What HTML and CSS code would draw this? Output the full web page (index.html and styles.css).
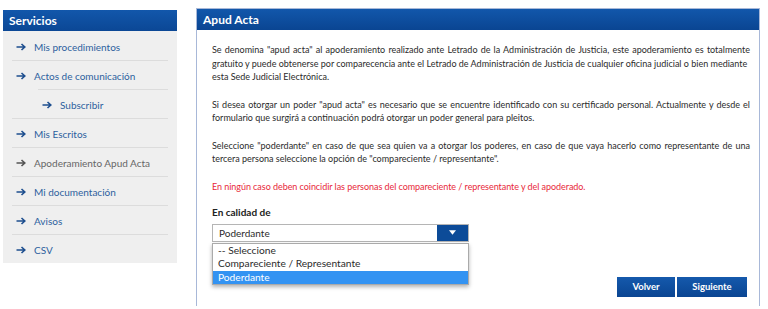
FILE: index.html
```html
<!DOCTYPE html>
<html lang="es">
<head>
    <meta charset="UTF-8">
    <title>Apud Acta</title>
    <link rel="stylesheet" href="styles.css">
</head>
<body>
    <div class="page">
        <aside class="sidebar">
            <div class="sidebar-title">Servicios</div>
            <ul class="nav">
                <li><a href="#"><svg class="arrow" viewBox="0 0 10 8"><path d="M0.5 4H8.5M5.5 1L8.8 4L5.5 7"/></svg>Mis procedimientos</a></li>
                <li><a href="#"><svg class="arrow" viewBox="0 0 10 8"><path d="M0.5 4H8.5M5.5 1L8.8 4L5.5 7"/></svg>Actos de comunicación</a></li>
                <li class="sub"><a href="#"><svg class="arrow" viewBox="0 0 10 8"><path d="M0.5 4H8.5M5.5 1L8.8 4L5.5 7"/></svg>Subscribir</a></li>
                <li><a href="#"><svg class="arrow" viewBox="0 0 10 8"><path d="M0.5 4H8.5M5.5 1L8.8 4L5.5 7"/></svg>Mis Escritos</a></li>
                <li class="current"><a href="#"><svg class="arrow" viewBox="0 0 10 8"><path d="M0.5 4H8.5M5.5 1L8.8 4L5.5 7"/></svg>Apoderamiento Apud Acta</a></li>
                <li><a href="#"><svg class="arrow" viewBox="0 0 10 8"><path d="M0.5 4H8.5M5.5 1L8.8 4L5.5 7"/></svg>Mi documentación</a></li>
                <li><a href="#"><svg class="arrow" viewBox="0 0 10 8"><path d="M0.5 4H8.5M5.5 1L8.8 4L5.5 7"/></svg>Avisos</a></li>
                <li><a href="#"><svg class="arrow" viewBox="0 0 10 8"><path d="M0.5 4H8.5M5.5 1L8.8 4L5.5 7"/></svg>CSV</a></li>
            </ul>
        </aside>

        <section class="panel">
            <div class="panel-title">Apud Acta</div>
            <div class="panel-body">
                <p>Se denomina "apud acta" al apoderamiento realizado ante Letrado de la Administración de Justicia, este apoderamiento es totalmente gratuito y puede obtenerse por comparecencia ante el Letrado de Administración de Justicia de cualquier oficina judicial o bien mediante<br>esta Sede Judicial Electrónica.</p>
                <p>Si desea otorgar un poder "apud acta" es necesario que se encuentre identificado con su certificado personal. Actualmente y desde el formulario que surgirá a continuación podrá otorgar un poder general para pleitos.</p>
                <p>Seleccione "poderdante" en caso de que sea quien va a otorgar los poderes, en caso de que vaya hacerlo como representante de una tercera persona seleccione la opción de "compareciente / representante".</p>
                <p class="warning">En ningún caso deben coincidir las personas del compareciente / representante y del apoderado.</p>

                <label class="field-label">En calidad de</label>
                <div class="select-wrap">
                    <div class="select">
                        <span class="select-value">Poderdante</span>
                        <span class="select-btn"><svg viewBox="0 0 8 5"><path d="M0 0H8L4 5Z"/></svg></span>
                    </div>
                    <ul class="options">
                        <li>-- Seleccione</li>
                        <li>Compareciente / Representante</li>
                        <li class="selected">Poderdante</li>
                    </ul>
                </div>

                <div class="actions">
                    <button class="btn">Volver</button>
                    <button class="btn">Siguiente</button>
                </div>
            </div>
        </section>
    </div>
</body>
</html>
```

FILE: styles.css
```css
body {
    margin: 0;
    background: #fff;
    font-family: Lato, "Open Sans", sans-serif;
    color: #2b2b2b;
}
.page {
    display: flex;
    align-items: flex-start;
    padding-left: 3px;
}

/* sidebar */
.sidebar {
    width: 174px;
    margin-top: 10px;
    background: #efefef;
}
.sidebar-title {
    height: 21px;
    line-height: 21px;
    padding-left: 6px;
    background: linear-gradient(#1257ab, #0b4795);
    color: #fff;
    font-weight: bold;
    font-size: 12px;
}
.nav {
    list-style: none;
    margin: 0;
    padding: 0 9px 0 9px;
}
.nav li {
    height: 29px;
    border-top: 1px solid #dcdcdc;
    box-sizing: border-box;
}
.nav li:first-child {
    border-top: none;
}
.nav li.sub {
    margin-left: 26px;
}
.nav a {
    display: flex;
    align-items: center;
    height: 100%;
    padding: 2px 0 0 4px;
    box-sizing: border-box;
    color: #2d5f9e;
    text-decoration: none;
    font-size: 10px;
}
.nav li.current a {
    color: #666;
}
.arrow {
    width: 10px;
    height: 8px;
    margin-right: 8px;
    fill: none;
    stroke: #1e4f8f;
    stroke-width: 1.6;
}
.nav li.current .arrow {
    stroke: #555;
}

/* main panel */
.panel {
    width: 562px;
    margin-left: 19px;
    margin-top: 8px;
    border: 1px solid #a8b8d8;
    border-bottom: none;
}
.panel-title {
    height: 21px;
    line-height: 21px;
    padding-left: 6px;
    background: linear-gradient(#1257ab, #0a4592);
    color: #fff;
    font-weight: bold;
    font-size: 12px;
}
.panel-body {
    padding: 13px 9px 9px 15px;
    font-size: 9px;
    line-height: 13.5px;
}
.panel-body p {
    margin: 0 0 14px;
    text-align: justify;
}
.panel-body p.warning {
    color: #e8283a;
    margin-bottom: 13px;
    letter-spacing: -0.05px;
}
.field-label {
    display: block;
    font-weight: bold;
    font-size: 10px;
    color: #222;
    margin-bottom: 4px;
}

/* select */
.select-wrap {
    position: relative;
    width: 257px;
}
.select {
    display: flex;
    height: 18px;
    border: 1px solid #b5b5b5;
    box-sizing: border-box;
    font-size: 10px;
}
.select-value {
    flex: 1;
    line-height: 16px;
    padding-left: 6px;
}
.select-btn {
    width: 31px;
    background: #0c4b98;
    display: flex;
    align-items: center;
    justify-content: center;
}
.select-btn svg {
    width: 7px;
    height: 5px;
    fill: #fff;
}
.options {
    position: absolute;
    top: 19px;
    left: 0;
    right: 0;
    margin: 0;
    padding: 0;
    list-style: none;
    background: #fff;
    border: 1px solid #aaa;
    box-shadow: 0 2px 4px rgba(0,0,0,0.3);
    font-size: 10.2px;
    line-height: 13.5px;
}
.options li {
    padding-left: 5px;
}
.options li.selected {
    background: #3393f2;
    color: #fff;
}

/* buttons */
.actions {
    display: flex;
    justify-content: flex-end;
    gap: 2px;
    margin-top: 35px;
    padding-right: 3px;
}
.btn {
    height: 20px;
    border: none;
    background: linear-gradient(#1559ac, #0a4592);
    color: #fff;
    font-family: inherit;
    font-weight: bold;
    font-size: 9.5px;
    padding: 0;
}
.btn:first-child {
    width: 58px;
}
.btn:last-child {
    width: 70px;
}
```
